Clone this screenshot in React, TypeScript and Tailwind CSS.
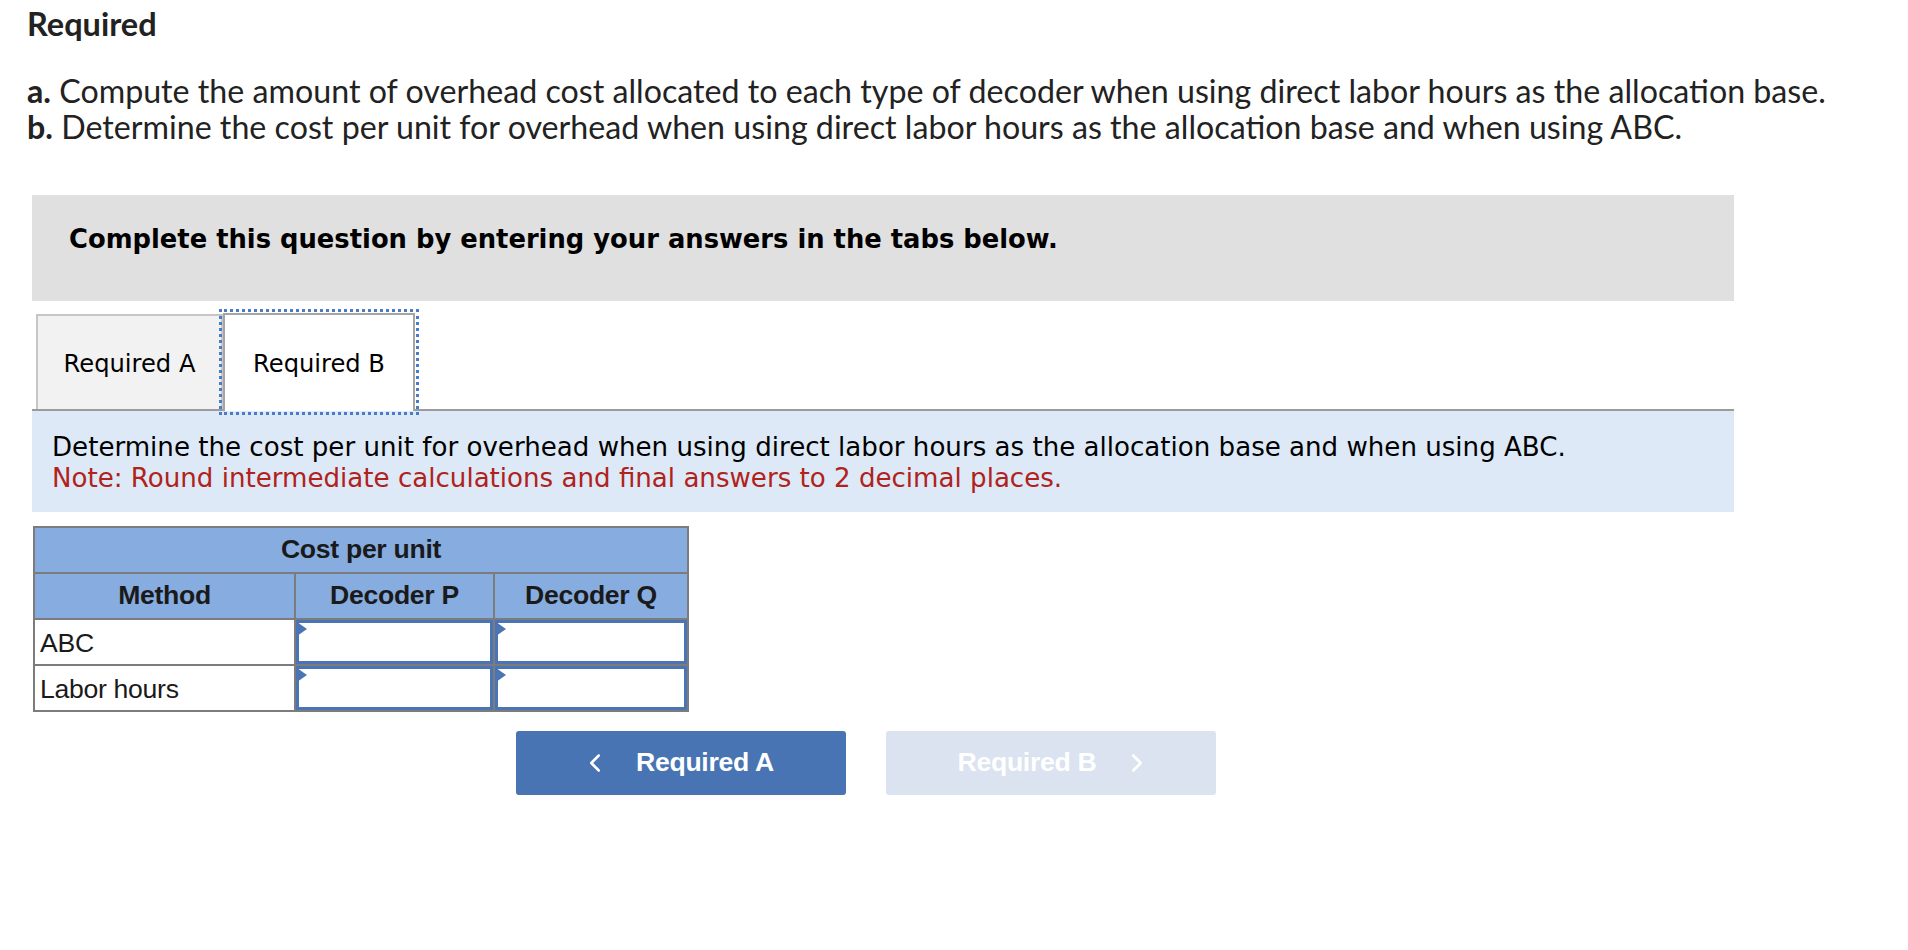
import { ChevronLeft, ChevronRight } from "lucide-react";

function AnswerCell() {
  return (
    <td className="border-2 border-[#7c7c7c] p-0 h-[46px]">
      <div className="relative h-full w-full">
        <div className="absolute inset-0 border-[3px] border-[#4a74b4] bg-white" />
        <span className="absolute left-[1px] top-[2px] h-0 w-0 border-y-[7px] border-l-[10px] border-y-transparent border-l-[#4a74b4]" />
      </div>
    </td>
  );
}

export default function App() {
  return (
    <div className="min-h-[950px] bg-white pl-[27px] pr-[174px] pt-[5px] text-[#222]">
      <div className="font-['Lato',sans-serif]">
        <h2 className="text-[32.5px] font-bold leading-[38px]">Required</h2>
        <div className="mt-[30px] whitespace-nowrap text-[32.2px] leading-[35.5px]">
          <p>
            <span className="font-bold">a.</span> Compute the amount of overhead cost allocated to each type of
            decoder when using direct labor hours as the allocation base.
          </p>
          <p>
            <span className="font-bold">b.</span> Determine the cost per unit for overhead when using direct labor
            hours as the allocation base and when using ABC.
          </p>
        </div>
      </div>

      <div className="ml-[5px] mt-[51px] font-['DejaVu_Sans',sans-serif]">
        <div className="flex h-[106px] items-center bg-[#e0e0e0] pb-[18px] pl-[37px]">
          <p className="text-[25.8px] font-bold text-black">
            Complete this question by entering your answers in the tabs below.
          </p>
        </div>

        <div className="mt-[12px] flex items-end border-b-2 border-[#9b9b9b] pl-[4px] text-[24.2px] text-black">
          <div className="flex h-[95px] w-[187px] items-center justify-center border-2 border-b-0 border-[#c6c6c6] bg-[#f2f2f2] pt-[3px]">
            Required A
          </div>
          <div className="-mb-[2px] flex h-[98px] w-[192px] items-center justify-center border-2 border-b-0 border-[#a5a5a5] bg-white pt-[3px] outline-[3px] outline-offset-[1px] outline-dotted outline-[#4a7bc8]">
            Required B
          </div>
        </div>

        <div className="bg-[#dde9f6] pb-[19px] pl-[20px] pt-[21px] text-[26.1px] leading-[30.5px]">
          <p className="text-black">
            Determine the cost per unit for overhead when using direct labor hours as the allocation base and when
            using ABC.
          </p>
          <p className="text-[#b0221b]">Note: Round intermediate calculations and final answers to 2 decimal places.</p>
        </div>

        <table className="mt-[14px] ml-[1px] w-[656px] border-collapse border-2 border-[#7c7c7c] font-['Liberation_Sans',sans-serif] text-[26.6px] tracking-[-0.3px] text-[#1a1a1a]">
          <thead>
            <tr className="h-[46px] bg-[#86ace0]">
              <th colSpan={3} className="border-2 border-[#7c7c7c] text-center font-bold">
                Cost per unit
              </th>
            </tr>
            <tr className="h-[46px] bg-[#86ace0]">
              <th className="w-[261px] border-2 border-[#7c7c7c] text-center font-bold">Method</th>
              <th className="w-[199px] border-2 border-[#7c7c7c] text-center font-bold">Decoder P</th>
              <th className="border-2 border-[#7c7c7c] text-center font-bold">Decoder Q</th>
            </tr>
          </thead>
          <tbody>
            <tr className="h-[46px]">
              <td className="border-2 border-[#7c7c7c] pl-[5px] pt-[3px]">ABC</td>
              <AnswerCell />
              <AnswerCell />
            </tr>
            <tr className="h-[46px]">
              <td className="border-2 border-[#7c7c7c] pl-[5px] pt-[3px]">Labor hours</td>
              <AnswerCell />
              <AnswerCell />
            </tr>
          </tbody>
        </table>

        <div className="mt-[19px] flex gap-[40px] pl-[484px] font-['Liberation_Sans',sans-serif] text-[26.6px] font-bold tracking-[-0.3px] text-white">
          <button className="flex h-[64px] w-[330px] items-center justify-center gap-[26px] rounded-[3px] bg-[#4874b4] pr-[8px]">
            <ChevronLeft size={30} strokeWidth={2} />
            Required A
          </button>
          <button className="flex h-[64px] w-[330px] items-center justify-center gap-[26px] rounded-[3px] bg-[#dae3ef] pl-[8px]">
            Required B
            <ChevronRight size={30} strokeWidth={2} />
          </button>
        </div>
      </div>
    </div>
  );
}
